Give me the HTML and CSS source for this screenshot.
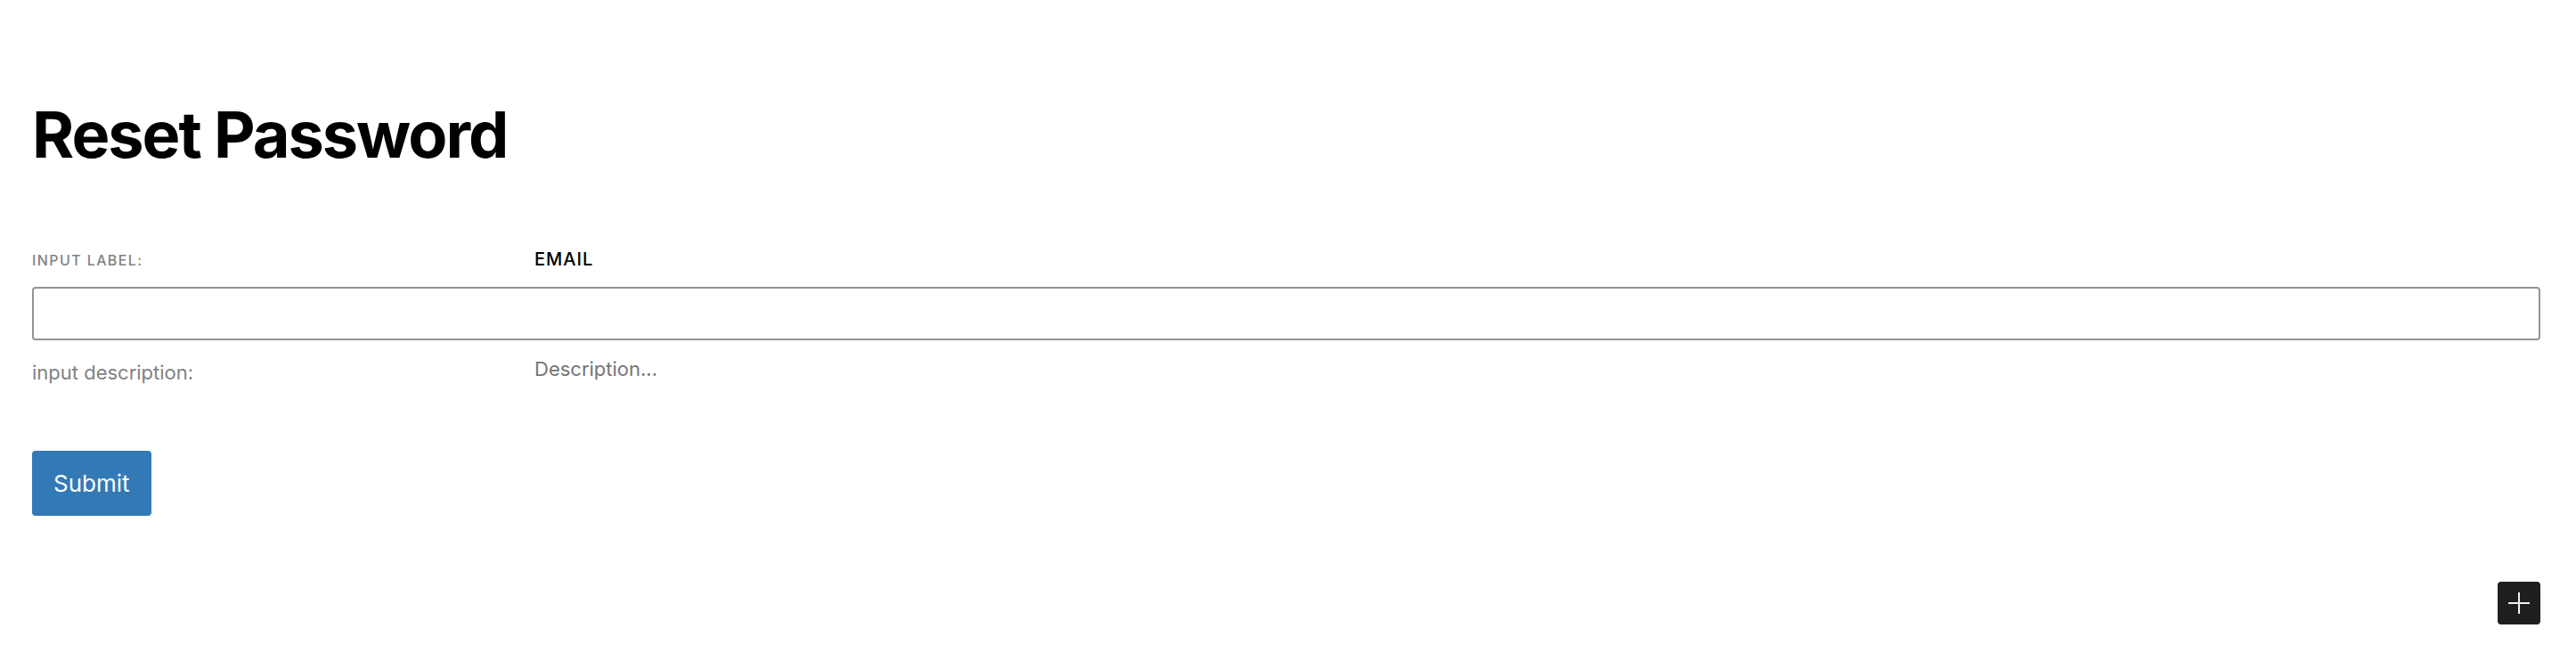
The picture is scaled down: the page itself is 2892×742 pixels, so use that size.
FILE: index.html
```html
<!DOCTYPE html>
<html lang="en">
<head>
    <meta charset="UTF-8">
    <meta name="viewport" content="width=device-width, initial-scale=1.0">
    <title>Reset Password</title>
    <link rel="stylesheet" href="styles.css">
</head>
<body>
    <div class="page">
        <h1 class="page-title">Reset Password</h1>

        <form class="reset-form" onsubmit="return false;">
            <div class="field-row field-head">
                <span class="field-key">Input label:</span>
                <span class="field-name">EMAIL</span>
            </div>
            <input type="email" class="field-input" aria-label="Email">
            <div class="field-row field-help">
                <span class="field-key-small">input description:</span>
                <span class="field-desc">Description...</span>
            </div>
            <button type="submit" class="submit-btn">Submit</button>
        </form>
    </div>

    <button class="add-block" aria-label="Add block">
        <svg width="24" height="24" viewBox="0 0 24 24">
            <path d="M12 0v24M0 12h24" stroke="#f0f0f0" stroke-width="2" fill="none"/>
        </svg>
    </button>
</body>
</html>
```

FILE: styles.css
```css
body {
    margin: 0;
    font-family: Inter, "Noto Sans", sans-serif;
    color: #000;
    background: #fff;
}
.page {
    padding: 115px 40px 0 36px;
}
.page-title {
    margin: 0;
    font-size: 72px;
    font-weight: 700;
    line-height: 72px;
    letter-spacing: -2px;
}
.reset-form {
    margin-top: 92px;
}
.field-row {
    display: flex;
}
.field-head {
    align-items: baseline;
    line-height: 24px;
}
.field-key {
    width: 564px;
    font-size: 16px;
    font-weight: 500;
    text-transform: uppercase;
    letter-spacing: 1.4px;
    color: #828282;
}
.field-name {
    font-size: 20px;
    font-weight: 500;
    letter-spacing: 1px;
}
.field-input {
    display: block;
    box-sizing: border-box;
    width: 100%;
    height: 60px;
    margin: 18px 0 0;
    border: 2px solid #949494;
    border-radius: 4px;
    font: inherit;
}
.field-help {
    margin-top: 18px;
    font-size: 22px;
    line-height: 28px;
}
.field-key-small {
    width: 564px;
    padding-top: 4px;
    color: #828282;
}
.field-desc {
    color: #757575;
}
.submit-btn {
    display: block;
    margin-top: 74px;
    height: 73px;
    padding: 0 24px;
    border: none;
    border-radius: 4px;
    background: #3379b6;
    color: #fff;
    font-family: inherit;
    font-size: 26px;
    line-height: 73px;
    cursor: pointer;
}
.add-block {
    position: absolute;
    top: 653px;
    right: 40px;
    width: 48px;
    height: 48px;
    padding: 0;
    border: none;
    border-radius: 4px;
    background: #1e1e1e;
    display: flex;
    align-items: center;
    justify-content: center;
    cursor: pointer;
}
```
